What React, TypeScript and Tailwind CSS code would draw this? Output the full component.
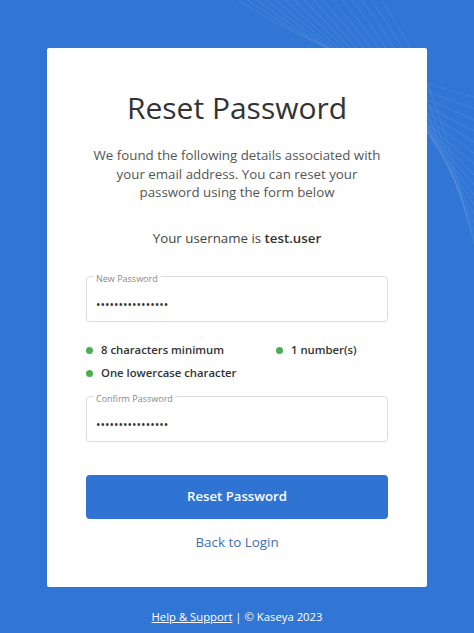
import React from "react";

function Waves() {
  const lines = [];
  for (let i = 0; i < 16; i++) {
    const o = i * 10;
    lines.push(
      <path
        key={i}
        d={`M ${230 + o} -10 C ${300 + o} ${40 + o * 0.3}, ${380 + o * 0.5} ${70 + o * 0.6}, ${490} ${100 + o * 1.2}`}
        fill="none"
        stroke="white"
        strokeOpacity={0.07}
        strokeWidth={1.2}
      />
    );
  }
  return (
    <svg className="absolute top-0 right-0 pointer-events-none" width="250" height="320" viewBox="230 0 250 320">
      {lines}
    </svg>
  );
}

function Field({ label }: { label: string }) {
  return (
    <div className="relative h-[46px] rounded-[4px] border border-[#dcdcdc] pl-[9px] pt-[14px]">
      <span className="absolute -top-[4px] left-[6px] bg-white px-[3px] text-[9px] leading-[11px] text-[#8a8a8a]">
        {label}
      </span>
      <span className="text-[12px] leading-[16px] text-[#333]">••••••••••••••••</span>
    </div>
  );
}

function Req({ text }: { text: string }) {
  return (
    <div className="flex items-center gap-[8px] h-[23px]">
      <span className="w-[7px] h-[7px] rounded-full bg-[#4cae50]" />
      <span className="text-[11.3px] font-semibold text-[#333]">{text}</span>
    </div>
  );
}

export default function App() {
  return (
    <div
      className="relative min-h-[633px] w-full overflow-hidden bg-[#3176d5] pt-[48px]"
      style={{ fontFamily: '"Open Sans", "Noto Sans", sans-serif' }}
    >
      <Waves />
      <div className="relative mx-auto w-[380px] rounded-[2px] bg-white px-[39px] pt-[40px] pb-[35px]">
        <h1 className="text-center text-[30px] leading-[40px] text-[#333]">Reset Password</h1>
        <p className="mt-[18px] text-center text-[13.3px] leading-[18.5px] text-[#555]">
          We found the following details associated with
          <br />
          your email address. You can reset your
          <br />
          password using the form below
        </p>
        <p className="mt-[26px] text-center text-[13.3px] leading-[20px] text-[#444]">
          Your username is <span className="font-semibold text-[#333]">test.user</span>
        </p>
        <div className="mt-[28px]">
          <Field label="New Password" />
        </div>
        <div className="mt-[17px] grid grid-cols-[190px_1fr]">
          <Req text="8 characters minimum" />
          <Req text="1 number(s)" />
          <Req text="One lowercase character" />
        </div>
        <div className="mt-[11px]">
          <Field label="Confirm Password" />
        </div>
        <button className="mt-[33px] flex h-[44px] w-full items-center justify-center rounded-[4px] bg-[#2f73d3] text-[13.2px] font-semibold text-white">
          Reset Password
        </button>
        <div className="mt-[13px] text-center text-[13.4px] leading-[20px] text-[#3f6db5]">Back to Login</div>
      </div>
      <div className="relative mt-[22px] text-center text-[11.3px] leading-[16px] text-white">
        <span className="underline">Help &amp; Support</span> | © Kaseya 2023
      </div>
    </div>
  );
}
